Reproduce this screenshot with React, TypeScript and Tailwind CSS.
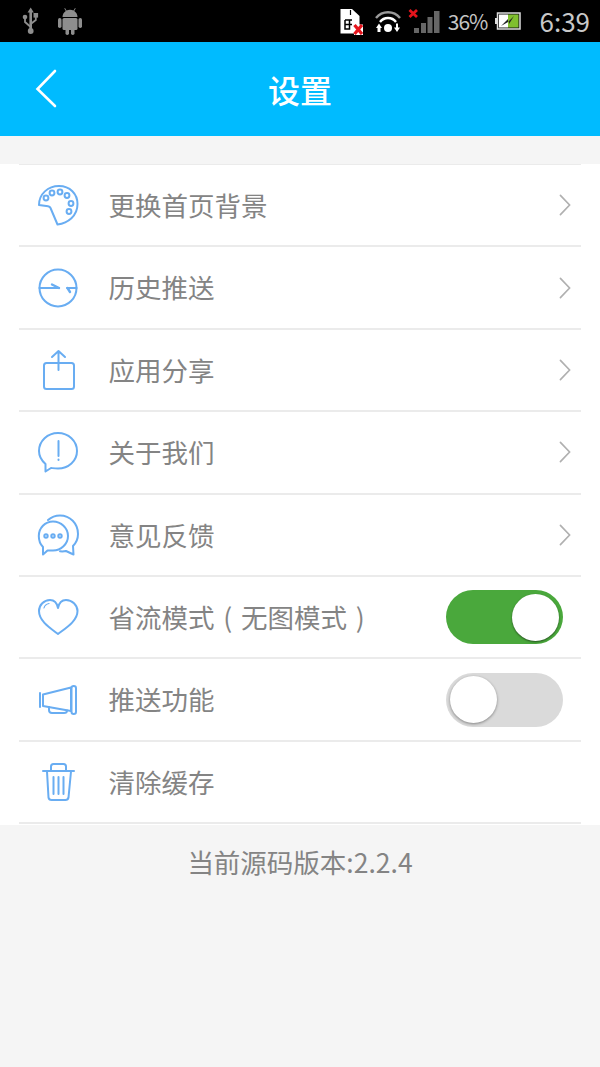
import { ReactNode } from 'react'

const font = '[font-family:"Noto_Sans_CJK_SC","Noto_Sans",sans-serif]'

function StatusBar() {
  return (
    <div className="h-[42px] bg-black flex items-center text-[#b4b4b4]">
      <svg viewBox="0 0 20 28" className="w-[20px] h-[28px] ml-[21px]" fill="none">
        <path d="M9.700 4 V24" stroke="#8e8e8e" strokeWidth="2.600" />
        <path d="M9.700 0.500 L12.800 5.500 H6.600 Z" fill="#8e8e8e" />
        <circle cx="9.700" cy="24" r="2.900" fill="#8e8e8e" />
        <path d="M4 11 V15 L9.700 20 M14.800 9 V13 L9.700 17" stroke="#8e8e8e" strokeWidth="1.800" />
        <circle cx="4" cy="10" r="2.300" fill="#8e8e8e" />
        <rect x="12.500" y="6" width="4.600" height="4.600" fill="#8e8e8e" />
      </svg>
      <svg viewBox="0 0 26 28" className="w-[26px] h-[28px] ml-[16px]" fill="#8e8e8e">
        <path d="M8 1 L9.500 3.500 A8 8 0 0 1 16.500 3.500 L18 1 L18.700 1.400 L17.200 4 A7.500 7.500 0 0 1 20.500 10 H5.500 A7.500 7.500 0 0 1 8.800 4 L7.300 1.400 Z" />
        <rect x="5.500" y="11" width="15" height="12" rx="1.500" />
        <rect x="1" y="11" width="3.500" height="10" rx="1.700" />
        <rect x="21.500" y="11" width="3.500" height="10" rx="1.700" />
        <rect x="8.500" y="21" width="3.500" height="7" rx="1.700" />
        <rect x="14" y="21" width="3.500" height="7" rx="1.700" />
      </svg>
      <div className="ml-auto flex items-center">
        <svg viewBox="0 0 23 28" className="w-[23px] h-[28px]">
          <path d="M0.500 2 H12 L19.500 9 V26.500 H0.500 Z" fill="#fff" />
          <path d="M5 13 H12 M5 13 V22 H9.500 V13 M5 17.500 H12" stroke="#000" strokeWidth="1.500" fill="none" />
          <path d="M10.500 3 V8" stroke="#000" strokeWidth="1.200" />
          <path d="M14 17.500 H23 V28 H14 Z" fill="#fff" />
          <path d="M14.500 18 L22 27 M22 18 L14.500 27" stroke="#e5141c" strokeWidth="3.200" />
        </svg>
        <svg viewBox="0 0 26 28" className="w-[26px] h-[28px] ml-[12px]" fill="none">
          <path d="M1 11 A15.500 15.500 0 0 1 25 11" stroke="#9a9a9a" strokeWidth="2.400" />
          <path d="M5 15 A10 10 0 0 1 21 15" stroke="#fff" strokeWidth="2.400" />
          <circle cx="13" cy="21" r="4" fill="#fff" />
          <path d="M1 21 L4 16.500 L7 21 H5.500 V25 H2.500 V21 Z M19 20.500 H21 V16.500 H23 V20.500 H25 L22 25 Z" fill="#fff" />
        </svg>
        <svg viewBox="0 0 32 28" className="w-[32px] h-[28px] ml-[7px]">
          <path d="M1.500 3 L9 10 M9 3 L1.500 10" stroke="#e5141c" strokeWidth="2.800" />
          <rect x="6" y="21" width="5" height="5" fill="#666" />
          <rect x="13" y="16" width="5" height="10" fill="#666" />
          <rect x="19.500" y="10" width="5" height="16" fill="#666" />
          <rect x="26" y="4" width="5.500" height="22" fill="#666" />
        </svg>
        <span className={`${font} text-[21px] leading-none ml-[8px] text-[#c4c4c4] tracking-[-1px]`}>36%</span>
        <svg viewBox="0 0 26 18" className="w-[26px] h-[18px] ml-[8px]">
          <rect x="0" y="6" width="2" height="6" fill="#ddd" />
          <rect x="2.500" y="1" width="22.500" height="16" fill="#111" stroke="#ddd" strokeWidth="1.500" />
          <rect x="4" y="2.500" width="9" height="13" fill="#fff" />
          <rect x="13" y="2.500" width="10.500" height="13" fill="#7fbf2e" />
          <path d="M6 14 L13 7 L13 10 L19 4 L14 12 L14 9.500 Z" fill="#222" />
        </svg>
        <span className={`${font} text-[26px] leading-none ml-[18px] mr-[10px] text-[#c8c8c8]`}>6:39</span>
      </div>
    </div>
  )
}

function Header() {
  return (
    <div className="h-[94px] bg-[#00bbff] flex items-center justify-center relative">
      <svg viewBox="0 0 24 40" className="absolute left-[34px] top-[27px] w-[24px] h-[40px]" fill="none">
        <path d="M21 2 L3.500 20 L21 37" stroke="#fff" strokeWidth="2.600" strokeLinecap="round" />
      </svg>
      <span className={`${font} text-white text-[32px] font-medium leading-none`}>设置</span>
    </div>
  )
}

const iconStroke = { fill: 'none', stroke: '#69adf2', strokeWidth: 2, strokeLinecap: 'round', strokeLinejoin: 'round' } as const

const icons: Record<string, ReactNode> = {
  palette: (
    <g {...iconStroke}>
      <path d="M1 20 C1 9 10 1 21 1 C32 1 39.500 9 39.500 19 C39.500 31 30 38 19.500 39.500 L12.500 23 Q12 21.500 10 21.200 Z" />
      <circle cx="8" cy="13" r="2.400" />
      <circle cx="14" cy="8" r="2.400" />
      <circle cx="22" cy="7" r="2.400" />
      <circle cx="29" cy="10.500" r="2.400" />
      <circle cx="33" cy="18.500" r="2.400" />
      <circle cx="31" cy="26.500" r="2.400" />
    </g>
  ),
  clock: (
    <g {...iconStroke}>
      <circle cx="20" cy="20" r="18.500" />
      <path d="M1.500 20 H21" />
      <path d="M14 16.500 L21 20" strokeWidth="2.400" />
      <path d="M29 20 H38.500" />
      <path d="M29.500 20 L32 24" strokeWidth="2.400" />
    </g>
  ),
  share: (
    <g {...iconStroke}>
      <rect x="6" y="13" width="30" height="26" rx="2.500" />
      <path d="M20.500 20 V1 M14 7 L20.500 1 L27 7" />
    </g>
  ),
  alert: (
    <g {...iconStroke}>
      <path d="M20 1 C30.500 1 39 9 39 19 C39 29 30.500 36.500 20 36.500 C17 36.500 15 36.200 13 36 L7.500 39.500 L7.500 32 C3.500 28.500 1 24 1 19 C1 9 9.500 1 20 1 Z" />
      <path d="M20.500 9 V24 M20.500 27.500 V28" />
    </g>
  ),
  chat: (
    <g {...iconStroke}>
      <path d="M10 5 C14 1.500 18 0.500 22 0.500 C32 0.500 40 8.500 40 19 C40 24 38 28 35 31 L35.500 39.500 L28 36 C26 36.500 24 36.500 22 36.300" />
      <path d="M15 6.500 C23 6.500 30 13 30 21 C30 29 23 35.500 15 35.500 C13 35.500 11 35.500 9.500 35.500 L5 39.500 L5 32 C2 29 0.800 25 0.800 21 C0.800 13 7 6.500 15 6.500 Z" />
      <circle cx="8" cy="21" r="1.700" />
      <circle cx="15" cy="21" r="1.700" />
      <circle cx="22" cy="21" r="1.700" />
    </g>
  ),
  heart: (
    <g {...iconStroke}>
      <path d="M20 37 C12 31 1 24 1 14 C1 8 6 3 12 3 C16 3 19 6 20 11 C21 6 24 3 28 3 C34 3 39.500 8 39.500 14 C39.500 24 28 31 20 37 Z" />
      <path d="M6 11 C6.500 8.500 8.500 7 11 6.500" strokeWidth="1.200" />
    </g>
  ),
  horn: (
    <g {...iconStroke}>
      <path d="M5 14.500 L33 7.500 V31 L5 26 Z" />
      <rect x="33.500" y="6" width="4.500" height="28" rx="2.200" />
      <path d="M2 13 V27" />
      <path d="M11 27 V30 Q11 33 14 33 H26 Q29 33 29 30.500" />
    </g>
  ),
  trash: (
    <g {...iconStroke}>
      <path d="M5 9 H36" />
      <path d="M13 8.500 V4.500 Q13 2 15.500 2 H25.500 Q28 2 28 4.500 V8.500" />
      <path d="M9 9.500 L10.500 35.500 Q11 38 13.500 38 H27.500 Q30 38 30.500 35.500 L33 9.500" />
      <path d="M15.500 15 V32 M20.500 15 V32 M25.500 15 V32" />
    </g>
  ),
}

function Chevron() {
  return (
    <svg viewBox="0 0 14 24" className="w-[14px] h-[22px] mr-[9px]" fill="none">
      <path d="M2 1.500 L12 12 L2 22.500" stroke="#b0b0b0" strokeWidth="1.800" strokeLinecap="round" />
    </svg>
  )
}

function Toggle({ on }: { on: boolean }) {
  if (on) {
    return (
      <div className="w-[117px] h-[54px] rounded-full bg-[#4aa83c] flex items-center justify-end pr-[4px] mr-[18px]">
        <div className="w-[47px] h-[47px] rounded-full bg-white shadow-[0_1px_2px_rgba(0,0,0,0.5)]" />
      </div>
    )
  }
  return (
    <div className="w-[117px] h-[54px] rounded-full bg-[#dadada] flex items-center pl-[4px] mr-[18px]">
      <div className="w-[47px] h-[47px] rounded-full bg-white shadow-[0_1px_3px_rgba(0,0,0,0.4)]" />
    </div>
  )
}

function Row({ icon, label, right }: { icon: string; label: ReactNode; right?: ReactNode }) {
  return (
    <div className="h-[82.400px] flex items-center border-b-2 border-[#ebebeb]">
      <svg viewBox="0 0 40 40" className="w-[40px] h-[40px] ml-[19px] overflow-visible">
        {icons[icon]}
      </svg>
      <span className="text-[26.500px] text-[#848484] ml-[30.500px] leading-none flex-1">{label}</span>
      {right}
    </div>
  )
}

function Paren({ children }: { children: ReactNode }) {
  return <span className="inline-block w-[1em] text-center">{children}</span>
}

export default function App() {
  return (
    <div className={`w-[600px] h-[1067px] bg-[#f5f5f5] overflow-hidden ${font}`}>
      <StatusBar />
      <Header />
      <div className="h-[28px]" />
      <div className="bg-white px-[19px] h-[661px]">
        <div className="h-[1px] bg-[#ebebeb]" />
        <Row icon="palette" label="更换首页背景" right={<Chevron />} />
        <Row icon="clock" label="历史推送" right={<Chevron />} />
        <Row icon="share" label="应用分享" right={<Chevron />} />
        <Row icon="alert" label="关于我们" right={<Chevron />} />
        <Row icon="chat" label="意见反馈" right={<Chevron />} />
        <Row
          icon="heart"
          label={
            <>
              省流模式<Paren>(</Paren>无图模式<Paren>)</Paren>
            </>
          }
          right={<Toggle on />}
        />
        <Row icon="horn" label="推送功能" right={<Toggle on={false} />} />
        <Row icon="trash" label="清除缓存" />
      </div>
      <div className="text-center text-[26.500px] leading-none text-[#848484] mt-[24px]">当前源码版本:2.2.4</div>
    </div>
  )
}
